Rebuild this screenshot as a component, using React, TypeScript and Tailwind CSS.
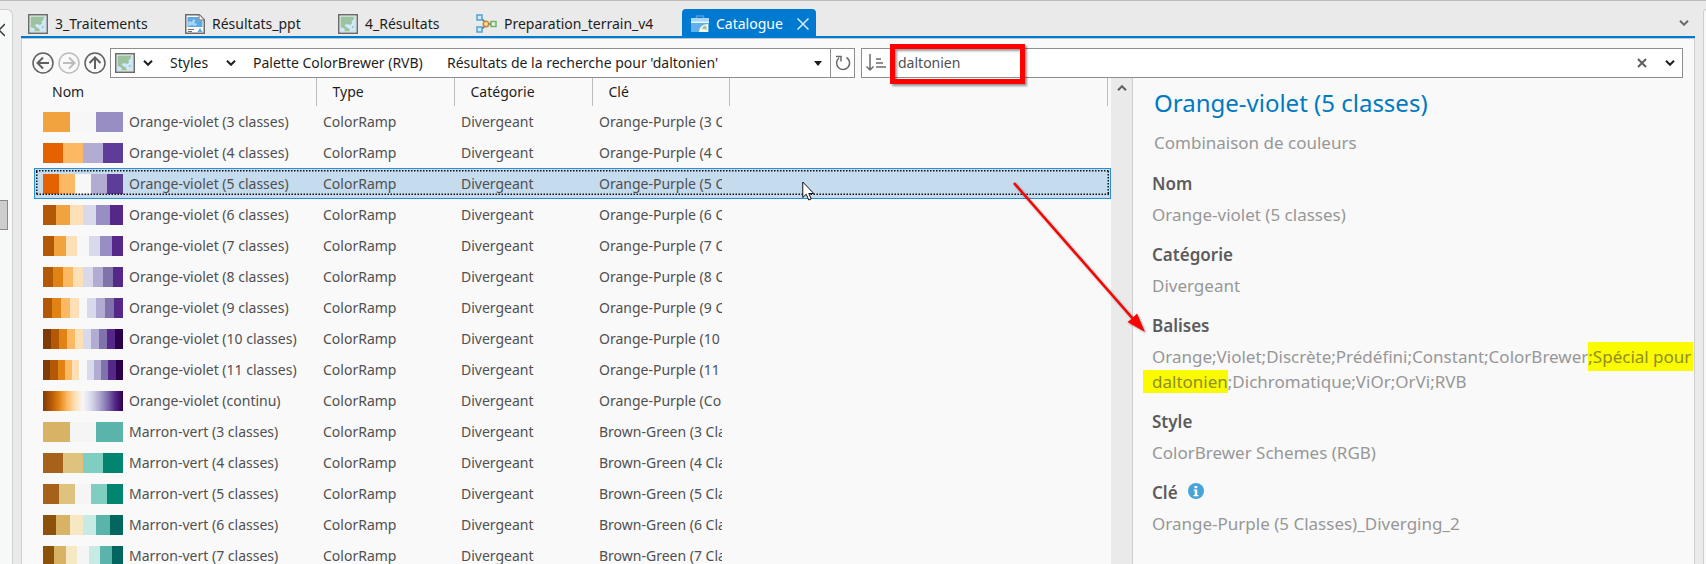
import { useState } from "react";
import type { ReactNode } from "react";

const PUOR: Record<string, string[]> = {
  "3": ["#f1a340", "#f7f7f7", "#998ec3"],
  "4": ["#e66101", "#fdb863", "#b2abd2", "#5e3c99"],
  "5": ["#e66101", "#fdb863", "#f7f7f7", "#b2abd2", "#5e3c99"],
  "6": ["#b35806", "#f1a340", "#fee0b6", "#d8daeb", "#998ec3", "#542788"],
  "7": ["#b35806", "#f1a340", "#fee0b6", "#f7f7f7", "#d8daeb", "#998ec3", "#542788"],
  "8": ["#b35806", "#e08214", "#fdb863", "#fee0b6", "#d8daeb", "#b2abd2", "#8073ac", "#542788"],
  "9": ["#b35806", "#e08214", "#fdb863", "#fee0b6", "#f7f7f7", "#d8daeb", "#b2abd2", "#8073ac", "#542788"],
  "10": ["#7f3b08", "#b35806", "#e08214", "#fdb863", "#fee0b6", "#d8daeb", "#b2abd2", "#8073ac", "#542788", "#2d004b"],
  "11": ["#7f3b08", "#b35806", "#e08214", "#fdb863", "#fee0b6", "#f7f7f7", "#d8daeb", "#b2abd2", "#8073ac", "#542788", "#2d004b"],
};

const BRBG: Record<string, string[]> = {
  "3": ["#d8b365", "#f5f5f5", "#5ab4ac"],
  "4": ["#a6611a", "#dfc27d", "#80cdc1", "#018571"],
  "5": ["#a6611a", "#dfc27d", "#f5f5f5", "#80cdc1", "#018571"],
  "6": ["#8c510a", "#d8b365", "#f6e8c3", "#c7eae5", "#5ab4ac", "#01665e"],
  "7": ["#8c510a", "#d8b365", "#f6e8c3", "#f5f5f5", "#c7eae5", "#5ab4ac", "#01665e"],
};

interface Ramp {
  name: string;
  itemKey: string;
  colors: string[];
  continuous?: boolean;
}

const RAMPS: Ramp[] = [
  ...["3", "4", "5", "6", "7", "8", "9", "10", "11"].map((n) => ({
    name: `Orange-violet (${n} classes)`,
    itemKey: `Orange-Purple (${n} Classes)`,
    colors: PUOR[n],
  })),
  {
    name: "Orange-violet (continu)",
    itemKey: "Orange-Purple (Continuous)",
    colors: PUOR["11"],
    continuous: true,
  },
  ...["3", "4", "5", "6", "7"].map((n) => ({
    name: `Marron-vert (${n} classes)`,
    itemKey: `Brown-Green (${n} Classes)`,
    colors: BRBG[n],
  })),
];

function rampGradient({ colors, continuous }: Ramp) {
  if (continuous) return `linear-gradient(to right, ${colors.join(", ")})`;
  const step = 100 / colors.length;
  const stops = colors.map((c, i) => `${c} ${i * step}% ${(i + 1) * step}%`);
  return `linear-gradient(to right, ${stops.join(", ")})`;
}

function MapIcon() {
  return (
    <svg viewBox="0 0 20 20" className="size-5 shrink-0" aria-hidden="true">
      <rect x="0.75" y="0.75" width="18.5" height="18.5" fill="#f4f8f6" stroke="#6b6b6b" strokeWidth="1.5" />
      <path d="M2.500 2.500h15v15h-15z" fill="#9cc3a0" />
      <path d="M17.500 3v14.500H12l-1-3-3-1.500-1.500-2 3-1 2.500 1 2-1.500-.5-2.500 2-1 .5-3z" fill="#cfe8fa" />
      <path d="M2.500 13l3 1 1.500 1.500-1 2H2.500z" fill="#cfe8fa" />
      <path d="M14 12.500l1.500-1v2l-1.500 1z" fill="#9cc3a0" />
    </svg>
  );
}

function LayoutIcon() {
  return (
    <svg viewBox="0 0 20 20" className="size-5 shrink-0" aria-hidden="true">
      <path d="M.75.75h13.5l5 5v13.5H.75z" fill="#fdfdfd" stroke="#6b6b6b" strokeWidth="1.5" />
      <path d="M2.500 3h11v3.500h4V13h-15z" fill="#5aa9e0" />
      <path d="M2.500 9l2-2 2 1 2-3 2 1-1 3 3 1-2 2-4-1-2 1-2.500-1z" fill="#a8d4f3" />
      <path d="M14 1v5h5" fill="#fff" stroke="#6b6b6b" strokeWidth="1" />
      <path d="M3 15.500h6M3 17.500h4" stroke="#6b6b6b" strokeWidth="1" />
      <path d="M15 14l2.500 4h-5z" fill="#5aa9e0" />
    </svg>
  );
}

function ModelIcon() {
  return (
    <svg viewBox="0 0 21 20" className="h-5 w-[21px] shrink-0" fill="none" strokeWidth="1.500" aria-hidden="true">
      <path d="M6 5l3 3M6 15l3-3M12 10h3" stroke="#6b6b6b" />
      <rect x="1" y="1" width="5" height="5" fill="#d3eafa" stroke="#4fa3d8" />
      <rect x="1" y="13" width="5" height="5" fill="#d3eafa" stroke="#4fa3d8" />
      <circle cx="10" cy="10" r="2.750" fill="#f9dc9a" stroke="#c08a3c" />
      <rect x="15" y="7.500" width="5" height="5" fill="#e4f3e0" stroke="#6db36d" />
    </svg>
  );
}

function CatalogIcon() {
  return (
    <svg viewBox="0 0 20 18" className="h-[18px] w-5 shrink-0" aria-hidden="true">
      <path d="M6.500 3V1h7v2" fill="none" stroke="#4f9ed6" strokeWidth="1.500" />
      <path d="M1 3h18v4H1z" fill="#a9d6f5" />
      <path d="M1 7h18v10H1z" fill="#5fb1e8" />
      <path d="M1 6.500h18v1.500H1z" fill="#e6f4fd" />
      <path d="M9 17c0-5 4-8 9-8v8z" fill="#f3f6e4" />
      <path d="M12 14c1-3 3-4 4-3l1 4-2-1z" fill="#9cc3a0" />
    </svg>
  );
}

function Chevron({ className = "" }: { className?: string }) {
  return (
    <svg viewBox="0 0 10 6" className={`h-[6px] w-[10px] shrink-0 ${className}`} fill="none" stroke="currentColor" strokeWidth="2" aria-hidden="true">
      <path d="M1 .75l4 4 4-4" />
    </svg>
  );
}

function NavButton({ label, path, disabled }: { label: string; path: string; disabled?: boolean }) {
  return (
    <button type="button" aria-label={label} disabled={disabled} className="text-[#5f5f5f] disabled:text-[#bdbdbd]">
      <svg viewBox="0 0 22 22" className="size-[22px]" fill="none" stroke="currentColor">
        <circle cx="11" cy="11" r="10" strokeWidth="1.500" />
        <path d={path} strokeWidth="2" />
      </svg>
    </button>
  );
}

function Tab({ icon, label, className }: { icon: ReactNode; label: string; className: string }) {
  return (
    <button type="button" role="tab" aria-selected={false} className={`flex h-full shrink-0 items-center gap-[7px] pt-[3px] text-left whitespace-nowrap ${className}`}>
      {icon}
      {label}
    </button>
  );
}

function FocusRect() {
  return (
    <svg className="pointer-events-none absolute top-[2px] left-[2px] h-[25px] w-[calc(100%-4px)]" aria-hidden="true">
      <rect x="0" y="0" width="100%" height="100%" fill="none" stroke="#111" strokeWidth="3" strokeDasharray="1.500 1.500" />
    </svg>
  );
}

function RampTable({ ramps }: { ramps: Ramp[] }) {
  const [selected, setSelected] = useState("Orange-violet (5 classes)");

  return (
    <table className="w-full table-fixed border-collapse text-left whitespace-nowrap text-[#505050]">
      <colgroup>
        <col className="w-[282px]" />
        <col className="w-[138px]" />
        <col className="w-[138px]" />
        <col className="w-[137px]" />
        <col />
        <col className="w-1" />
      </colgroup>
      <thead className="text-[#1e1e1e]">
        <tr className="h-7">
          <th className="border-r border-[#bdbdbd] pl-[18px] font-normal">Nom</th>
          <th className="border-r border-[#bdbdbd] pl-4 font-normal">Type</th>
          <th className="border-r border-[#bdbdbd] pl-4 font-normal">Catégorie</th>
          <th className="border-r border-[#bdbdbd] pl-4 font-normal">Clé</th>
          <td className="border-r border-[#bdbdbd]" />
          <td />
        </tr>
      </thead>
      <tbody>
        {ramps.map((ramp) => {
          const active = ramp.name === selected;
          return (
            <tr
              key={ramp.name}
              onClick={() => setSelected(ramp.name)}
              aria-selected={active}
              className={`relative h-[31px] ${active ? "bg-[#c5dbee] outline outline-[#2a8fd0] -outline-offset-1" : ""}`}
            >
              <td className="p-0 pl-[9px]">
                <div className="flex items-center gap-[6px]">
                  <span className="h-5 w-20 shrink-0" style={{ background: rampGradient(ramp) }} />
                  {ramp.name}
                </div>
                {active && <FocusRect />}
              </td>
              <td className="p-0 pl-[7px]">ColorRamp</td>
              <td className="p-0 pl-[7px]">Divergeant</td>
              <td className="p-0 pr-[7px] pl-[7px]">
                <div className="overflow-hidden">{ramp.itemKey}</div>
              </td>
              <td colSpan={2} className="p-0">
                {active && (
                  <svg viewBox="0 0 13 20" className="absolute top-[13px] left-[768px] h-5 w-[13px]" aria-hidden="true">
                    <path d="M.75 1v15.500l3.500-3.250 2.500 5.750 2.500-1-2.500-5.500h5z" fill="#fff" stroke="#111" strokeWidth="1" />
                  </svg>
                )}
              </td>
            </tr>
          );
        })}
      </tbody>
    </table>
  );
}

function Field({ label, children }: { label: ReactNode; children: ReactNode }) {
  return (
    <div className="mb-4">
      <dt className="mb-[6px] flex h-6 items-center gap-[10px] font-semibold text-[#5c5c5c]">{label}</dt>
      <dd className="leading-[25px] text-[#979797]">{children}</dd>
    </div>
  );
}

function Details() {
  return (
    <aside className="relative w-[562px] shrink-0 border-l border-[#cfcfcf] pr-3 pl-[19px] text-[17px]">
      <h2 className="pt-[7px] pl-[2px] text-[24px] leading-9 text-[#007ac2]">Orange-violet (5 classes)</h2>
      <p className="mt-[10px] mb-[17px] pl-[2px] leading-6 text-[#979797]">Combinaison de couleurs</p>
      <dl>
        <Field label="Nom">Orange-violet (5 classes)</Field>
        <Field label="Catégorie">Divergeant</Field>
        <Field label="Balises">
          Orange;Violet;Discrète;Prédéfini;Constant;ColorBrewer
          <mark className="-mr-[2px] bg-[#fafa00] py-[3px] pr-[2px] whitespace-nowrap text-[#8f8f25]">;Spécial pour</mark>{" "}
          <mark className="-ml-[9px] bg-[#fafa00] pl-[9px] text-[#8f8f25]">daltonien</mark>
          ;Dichromatique;ViOr;OrVi;RVB
        </Field>
        <Field label="Style">ColorBrewer Schemes (RGB)</Field>
        <Field
          label={
            <>
              Clé
              <svg viewBox="0 0 16 16" className="mb-1 size-4" role="img" aria-label="Information">
                <circle cx="8" cy="8" r="8" fill="#47a3da" />
                <path d="M6.500 3h2.750v2.250H6.500zM5.750 6.500h3.500V12h1.250v1.250h-5V12h1.250V7.750h-1z" fill="#fff" />
              </svg>
            </>
          }
        >
          Orange-Purple (5 Classes)_Diverging_2
        </Field>
      </dl>
      <svg viewBox="0 0 140 156" className="pointer-events-none absolute top-[102px] -left-[124px] h-[156px] w-[140px] drop-shadow-[1px_1px_1px_rgba(0,0,0,0.4)]" aria-hidden="true">
        <path d="M5 3l120 137" stroke="#fe0000" strokeWidth="2.500" />
        <path d="M136 152l-17.500-10 4.500-3.500 5-5z" fill="#fe0000" />
      </svg>
    </aside>
  );
}

export default function App() {
  const [query, setQuery] = useState("daltonien");

  return (
    <div className="flex h-screen overflow-hidden border-t border-[#bcbcc2] bg-[#eaeaea] font-['Noto_Sans','Open_Sans',sans-serif] text-[14px] leading-5 text-[#1e1e1e]">
      <div className="mt-2 flex w-[13px] shrink-0 flex-col rounded-tr-md border-t border-r border-[#cfcfcf] bg-[#f7f9f8]">
        <svg viewBox="0 0 5 14" className="mt-[13px] h-[14px] w-[5px]" fill="none" stroke="#333" strokeWidth="1.500" aria-hidden="true">
          <path d="M5 1L-1 7l6 6" />
        </svg>
        <div className="mt-[163px] h-[30px] w-2 border border-l-0 border-[#8a8a8a] bg-[#cdcdcd]" />
      </div>

      <main className="mr-2 ml-2 flex min-w-0 flex-1 flex-col">
        <div role="tablist" aria-label="Vues" className="flex h-[35px] shrink-0 items-center pt-2 pl-[7px]">
          <Tab icon={<MapIcon />} label="3_Traitements" className="w-[157px]" />
          <Tab icon={<LayoutIcon />} label="Résultats_ppt" className="w-[153px]" />
          <Tab icon={<MapIcon />} label="4_Résultats" className="w-[138px]" />
          <Tab icon={<ModelIcon />} label="Preparation_terrain_v4" className="w-[206px]" />
          <div className="flex h-full w-[134px] shrink-0 items-center justify-between rounded-t bg-[#007ad0] pt-[3px] pr-[7px] pl-2 text-white">
            <button type="button" role="tab" aria-selected className="flex items-center gap-[6px]">
              <CatalogIcon />
              Catalogue
            </button>
            <button type="button" aria-label="Fermer">
              <svg viewBox="0 0 12 12" className="size-3" stroke="#d9ecf9" strokeWidth="1.500">
                <path d="M.5.5l11 11M11.500.5l-11 11" />
              </svg>
            </button>
          </div>
          <button type="button" aria-label="Liste des vues" className="mr-[6px] ml-auto text-[#6b6b6b]">
            <Chevron />
          </button>
        </div>

        <div className="flex min-h-0 flex-1 flex-col border-t-2 border-[#007ad0] bg-[#f9f9f9]">
          <div className="flex min-h-0 flex-1 flex-col border-x border-t border-x-[#cfcfcf] border-t-[#b7c9d8]">
            <div className="flex h-[39px] shrink-0 items-end pr-[11px] pl-[10px]">
              <div className="mb-1 flex gap-1">
                <NavButton label="Précédent" path="M17 11H6M11 5.500L5.500 11l5.500 5.500" />
                <NavButton label="Suivant" disabled path="M5 11h11M11 5.500l5.500 5.500-5.500 5.500" />
                <NavButton label="Dossier parent" path="M11 17V6M5.500 11L11 5.500l5.500 5.500" />
              </div>
              <div className="ml-1 flex h-[30px] w-[721px] shrink-0 items-center border border-[#8e8e8e] bg-white pl-1 whitespace-nowrap">
                <MapIcon />
                <button type="button" aria-label="Emplacements" className="ml-2">
                  <Chevron />
                </button>
                <button type="button" className="ml-[17px] flex w-[83px] items-center justify-between pr-[17px]">
                  Styles
                  <Chevron />
                </button>
                <button type="button" className="w-[194px] text-left">Palette ColorBrewer (RVB)</button>
                <span>Résultats de la recherche pour 'daltonien'</span>
                <button type="button" aria-label="Historique" className="mr-2 ml-auto">
                  <svg viewBox="0 0 8 5" className="h-[5px] w-2">
                    <path d="M0 0h8L4 5z" fill="#1e1e1e" />
                  </svg>
                </button>
              </div>
              <button type="button" aria-label="Actualiser" className="flex h-[30px] w-6 shrink-0 items-center justify-center border border-l-0 border-[#8e8e8e] bg-white">
                <svg viewBox="0 0 16 16" className="size-4" fill="none" stroke="#6b6b6b" strokeWidth="1.500">
                  <path d="M11.500 2.500A6.500 6.500 0 1 1 4 3M1 1.500h5v5" />
                </svg>
              </button>

              <div className="relative ml-[6px] flex h-[30px] min-w-0 flex-1 items-center border border-[#8e8e8e] bg-white">
                <button type="button" aria-label="Trier" className="ml-1">
                  <svg viewBox="0 0 20 18" className="h-[18px] w-5" fill="none" stroke="#6b6b6b" strokeWidth="1.500">
                    <path d="M4 0v16M.5 12.500L4 16l3.500-3.500M10 5h5M10 9h7M10 13h10" />
                  </svg>
                </button>
                <input
                  type="text"
                  aria-label="Rechercher"
                  value={query}
                  onChange={(e) => setQuery(e.target.value)}
                  className="ml-3 min-w-0 flex-1 bg-transparent text-[#505050] outline-none"
                />
                <button type="button" aria-label="Effacer" onClick={() => setQuery("")} className="mr-[18px]">
                  <svg viewBox="0 0 10 10" className="size-[10px]" stroke="#5f5f5f" strokeWidth="2">
                    <path d="M1 1l8 8M9 1L1 9" />
                  </svg>
                </button>
                <button type="button" aria-label="Options de recherche" className="mr-[7px]">
                  <Chevron />
                </button>
                <div className="pointer-events-none absolute -top-[5px] left-[28px] h-10 w-[135px] border-5 border-[#fe0000] drop-shadow-[2px_2px_1px_rgba(0,0,0,0.4)]" />
              </div>
            </div>

            <div className="flex min-h-0 flex-1">
              <div className="min-w-0 flex-1 overflow-hidden pl-3">
                <RampTable ramps={RAMPS} />
              </div>
              <div className="w-[21px] shrink-0 bg-[#eaeaea]">
                <button type="button" aria-label="Défiler vers le haut" className="flex h-5 w-full items-center justify-center text-[#5f5f5f]">
                  <Chevron className="rotate-180" />
                </button>
              </div>
              <Details />
            </div>
          </div>
        </div>
      </main>

      <div className="mt-2 w-[3px] shrink-0 rounded-tl-md border-t border-l border-[#cfcfcf] bg-[#f7f9f8]" />
    </div>
  );
}
